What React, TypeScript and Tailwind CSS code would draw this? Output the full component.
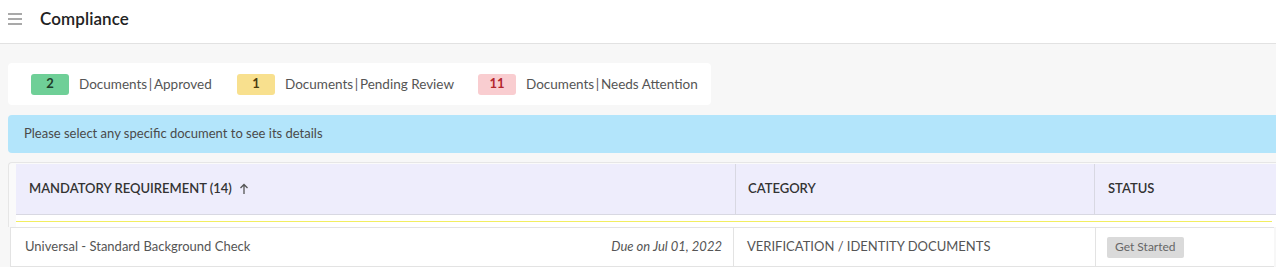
import React from 'react';

const font = { fontFamily: '"Source Sans Pro", Lato, "Noto Sans", sans-serif' };

const Badge: React.FC<{ n: number; tone: 'green' | 'yellow' | 'red' }> = ({ n, tone }) => {
  const cls =
    tone === 'green'
      ? 'bg-[#6fcf97] text-[#1e3d2a]'
      : tone === 'yellow'
      ? 'bg-[#f8e08e] text-[#4a3c10]'
      : 'bg-[#f9cdd0] text-[#b3262d]';
  return (
    <span className={`w-[38px] h-[21px] shrink-0 rounded-[3px] flex items-center justify-center text-[13px] font-bold ${cls}`}>
      {n}
    </span>
  );
};

const Summary: React.FC<{ n: number; tone: 'green' | 'yellow' | 'red'; label: string; w: string }> = ({ n, tone, label, w }) => (
  <div className={`flex items-center whitespace-nowrap ${w}`}>
    <Badge n={n} tone={tone} />
    <span className="ml-[10px]">Documents{'\u2009|\u2009'}{label}</span>
  </div>
);

export default function App() {
  return (
    <div className="w-[1276px] h-[267px] overflow-hidden bg-[#f7f7f7] text-[#333]" style={font}>
      <header className="h-[44px] bg-white border-b border-[#e2e2e2] flex items-center pl-[8px] pb-[6px]">
        <svg width="14" height="12" viewBox="0 0 14 12" className="text-[#555]">
          <path d="M0 1h14M0 6h14M0 11h14" stroke="currentColor" strokeWidth="1.2" />
        </svg>
        <h1 className="ml-[18px] text-[17px] font-semibold text-[#222] tracking-[0.1px]">Compliance</h1>
      </header>

      <div className="pl-[8px] pt-[19px]">
        <div className="w-[703px] h-[42px] bg-white rounded-[4px] flex items-center pl-[23px] text-[13.5px] text-[#555]">
          <Summary n={2} tone="green" label="Approved" w="w-[206px]" />
          <Summary n={1} tone="yellow" label="Pending Review" w="w-[241px]" />
          <Summary n={11} tone="red" label="Needs Attention" w="w-[200px]" />
        </div>

        <div className="mt-[10px] h-[38px] bg-[#b3e5fb] rounded-l-[4px] flex items-center pl-[16px] text-[13px] text-[#4a4a4a]">
          Please select any specific document to see its details
        </div>

        <div className="mt-[9px] border-l border-t border-[#e6e6e6] rounded-tl-[4px] bg-[#fafafa] pl-[7px] pt-px">
          <div className="grid grid-cols-[720px_359px_1fr] h-[51px] bg-[#eeedfc] border-b border-[#d8d8e2] text-[13px] font-semibold text-[#333] uppercase">
            <div className="flex items-center pl-[13px] border-r border-[#d8d8e2]">
              Mandatory Requirement (14)
              <svg width="10" height="12" viewBox="0 0 10 12" className="ml-[7px] text-[#555]">
                <path d="M5 11V1.5M1.5 5L5 1.5 8.5 5" stroke="currentColor" strokeWidth="1.3" fill="none" />
              </svg>
            </div>
            <div className="flex items-center pl-[12px] border-r border-[#d8d8e2]">Category</div>
            <div className="flex items-center pl-[13px]">Status</div>
          </div>
          <div className="h-[12px] bg-white flex items-center">
            <div className="w-[1256px] h-px bg-[#f2ee60]" />
          </div>
        </div>

        <div className="ml-[2px] mr-[2px] grid grid-cols-[723px_362px_1fr] h-[40px] bg-white border-y border-l border-[#e3e3e3] text-[13px] text-[#555]">
          <div className="flex items-center justify-between pl-[14px] pr-[11px] border-r border-[#e3e3e3]">
            <span>Universal - Standard Background Check</span>
            <span className="italic">Due on Jul 01, 2022</span>
          </div>
          <div className="flex items-center pl-[13px] border-r border-[#e3e3e3] uppercase">
            Verification / Identity Documents
          </div>
          <div className="flex items-center pl-[11px]">
            <span className="h-[21px] px-[8px] flex items-center rounded-[2px] bg-[#dadada] text-[12px] text-[#666]">
              Get Started
            </span>
          </div>
        </div>
      </div>
    </div>
  );
}
